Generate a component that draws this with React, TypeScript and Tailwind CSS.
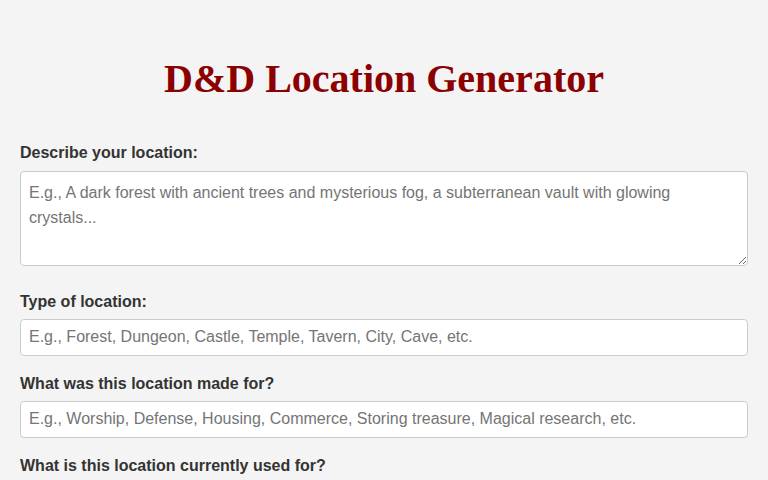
export default function App() {
  const field =
    'block w-full rounded-[4px] border border-[#ccc] bg-white p-2 text-[16px] text-[#333] placeholder:text-[#757575] focus:outline-none';
  return (
    <div className="min-h-screen bg-[#f4f4f4] px-5 pt-5 font-['Liberation_Sans',Arial,sans-serif] leading-[1.6] text-[#333]">
      <h1 className="mt-[27px] mb-[29px] text-center font-['Liberation_Serif','Times_New_Roman',serif] text-[40px] font-bold leading-[64px] text-[#8b0000]">
        D&amp;D Location Generator
      </h1>

      <div className="mb-[23px]">
        <label className="mb-[5px] block font-bold">Describe your location:</label>
        <textarea
          rows={3}
          className={field + ' h-[95px] resize leading-[1.6]'}
          placeholder="E.g., A dark forest with ancient trees and mysterious fog, a subterranean vault with glowing crystals..."
        />
      </div>

      <div className="mb-[15px]">
        <label className="mb-[5px] block font-bold">Type of location:</label>
        <input
          type="text"
          className={field + ' leading-[1.15]'}
          placeholder="E.g., Forest, Dungeon, Castle, Temple, Tavern, City, Cave, etc."
        />
      </div>

      <div className="mb-[15px]">
        <label className="mb-[5px] block font-bold">What was this location made for?</label>
        <input
          type="text"
          className={field + ' leading-[1.15]'}
          placeholder="E.g., Worship, Defense, Housing, Commerce, Storing treasure, Magical research, etc."
        />
      </div>

      <div className="mb-[15px]">
        <label className="mb-[5px] block font-bold">What is this location currently used for?</label>
        <input
          type="text"
          className={field + ' leading-[1.15]'}
          placeholder="E.g., Abandoned, Bandit hideout, Still in use, Monster lair, etc."
        />
      </div>
    </div>
  );
}
